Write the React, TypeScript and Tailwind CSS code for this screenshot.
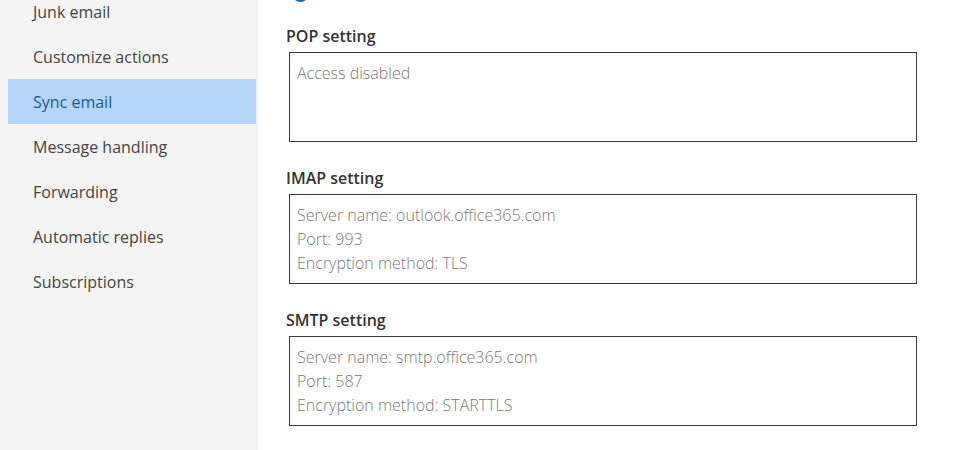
const navItems = [
  "Junk email",
  "Customize actions",
  "Sync email",
  "Message handling",
  "Forwarding",
  "Automatic replies",
  "Subscriptions",
];

const settings = [
  { title: "POP setting", lines: ["Access disabled"] },
  {
    title: "IMAP setting",
    lines: ["Server name: outlook.office365.com", "Port: 993", "Encryption method: TLS"],
  },
  {
    title: "SMTP setting",
    lines: ["Server name: smtp.office365.com", "Port: 587", "Encryption method: STARTTLS"],
  },
];

export default function App() {
  return (
    <div
      className="flex h-[450px] w-[960px] overflow-hidden bg-white"
      style={{ fontFamily: '"Open Sans", "Noto Sans", sans-serif' }}
    >
      <aside className="w-[258px] shrink-0 border-r border-[#ececec] bg-[#f4f4f4]">
        <ul className="-mt-[11px]">
          {navItems.map((label) => {
            const selected = label === "Sync email";
            return (
              <li
                key={label}
                className={
                  selected
                    ? "ml-2 mr-[1px] flex h-[45px] items-center bg-[#b3d6fa] pl-[25px] text-[16px] text-[#1b5a96]"
                    : "ml-2 mr-[1px] flex h-[45px] items-center pl-[25px] text-[16px] text-[#444444]"
                }
              >
                {label}
              </li>
            );
          })}
        </ul>
      </aside>

      <main className="flex-1 pl-[28px]">
        <div className="-mt-[15px] ml-[6px] h-[17px] w-[17px] rounded-full border-[2px] border-[#0f6cbd]" />
        <div className="mt-[23px] flex flex-col gap-[25px]">
          {settings.map((s) => (
            <section key={s.title}>
              <h3 className="h-[22px] text-[16px] font-semibold leading-[22px] text-[#333333]">{s.title}</h3>
              <div className="ml-[3px] mt-[5px] h-[90px] w-[628px] border border-[#3b3b3b] px-[7px] pt-[8px]">
                {s.lines.map((line) => (
                  <div key={line} className="text-[16px] font-light leading-[24px] text-[#7a7a7a]">
                    {line}
                  </div>
                ))}
              </div>
            </section>
          ))}
        </div>
      </main>
    </div>
  );
}
